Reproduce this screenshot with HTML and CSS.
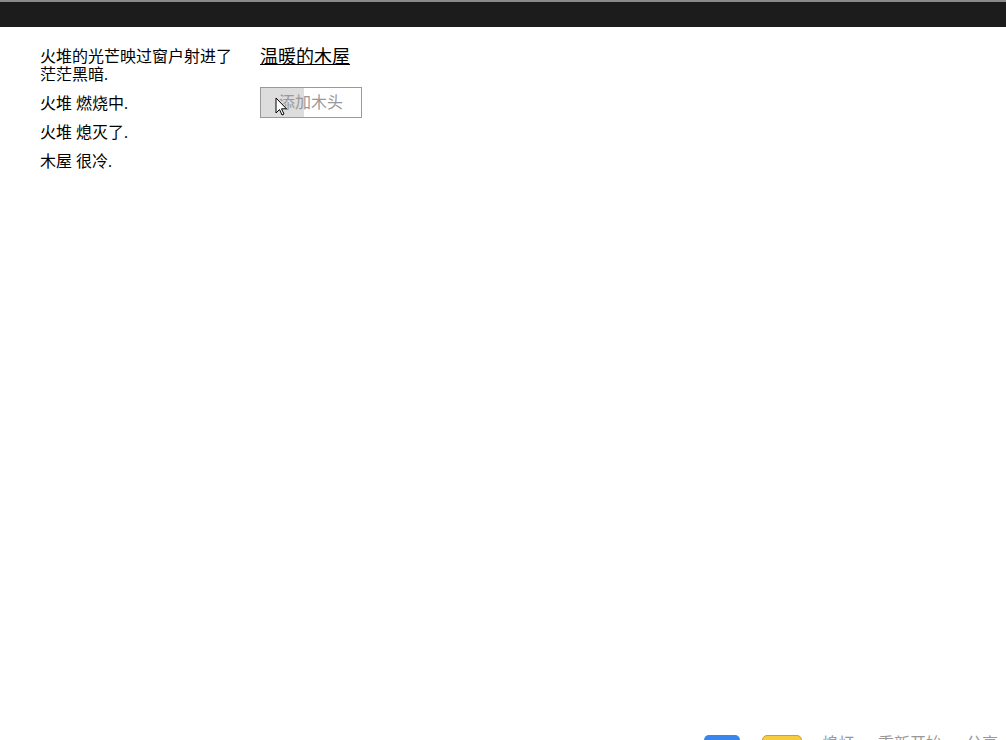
FILE: index.html
```html
<!DOCTYPE html>
<html>
<head>
    <link rel="stylesheet" href="styles.css">
</head>
<body>
    <div class="top-bar"></div>

    <div class="main">
        <div class="notifications">
            <div class="notification">火堆的光芒映过窗户射进了茫茫黑暗.</div>
            <div class="notification">火堆 燃烧中.</div>
            <div class="notification">火堆 熄灭了.</div>
            <div class="notification">木屋 很冷.</div>
        </div>

        <div class="location">
            <div class="header-button selected">温暖的木屋</div>
            <div class="button disabled">
                <div class="cooldown"></div>
                <span class="label">添加木头</span>
                <svg class="cursor" viewBox="0 0 12 19" width="12" height="19">
                    <path d="M1 1v15l3.5-3.5 2.5 5.5 2-1-2.5-5.2h5z" fill="#fff" stroke="#000" stroke-width="1"/>
                </svg>
            </div>
        </div>
    </div>

    <div class="footer">
        <div class="footer-logo">
            <svg viewBox="0 0 56 8" width="56" height="8">
                <path d="M0 3 Q12 1 24 6 L22 8 Q12 4 0 3z" fill="#111"/>
                <path d="M56 0 Q44 2 32 7 L36 8 Q46 3 56 0z" fill="#111"/>
            </svg>
        </div>
        <div class="footer-links">
            <span class="badge blue"></span>
            <span class="badge yellow"></span>
            <span class="link">熄灯.</span>
            <span class="link">重新开始.</span>
            <span class="link">分享.</span>
        </div>
    </div>
</body>
</html>
```

FILE: styles.css
```css
* {
    margin: 0;
    padding: 0;
    box-sizing: border-box;
}

html, body {
    height: 740px;
    overflow: hidden;
}

body {
    font-family: "Liberation Serif", "Noto Sans CJK SC", serif;
    font-size: 16px;
    color: #000;
    background: #fff;
}

.top-bar {
    height: 27px;
    background: #1c1c1c;
    border-top: 2px solid #8a8a8a;
}

.main {
    height: 708px;
    display: flex;
    padding: 21px 0 0 40px;
}

.notifications {
    width: 200px;
    line-height: 18px;
}

.notification {
    margin-bottom: 11px;
}

.location {
    margin-left: 20px;
    display: flex;
    flex-direction: column;
    align-items: flex-start;
}

.header-button {
    font-size: 18px;
    line-height: 20px;
    margin-top: -1px;
    cursor: pointer;
}

.header-button.selected {
    text-decoration: underline;
}

.button {
    position: relative;
    margin-top: 20px;
    width: 102px;
    height: 31px;
    border: 1px solid #999;
    color: #999;
    text-align: center;
    line-height: 29px;
    cursor: pointer;
}

.cooldown {
    position: absolute;
    left: 0;
    top: 0;
    bottom: 0;
    width: 43px;
    background: #dddddd;
}

.label {
    position: relative;
}

.cursor {
    position: absolute;
    left: 14px;
    top: 9px;
}

.footer {
    height: 40px;
    display: flex;
    align-items: flex-start;
    padding-left: 511px;
}

.footer-logo {
    width: 56px;
    height: 8px;
}

.footer-links {
    margin-left: 137px;
    display: flex;
    align-items: flex-start;
    color: #999;
    font-size: 16px;
    line-height: 18px;
}

.badge {
    display: block;
    height: 24px;
    border-radius: 5px;
}

.badge.blue {
    width: 36px;
    background: #3a86ef;
}

.badge.yellow {
    width: 40px;
    margin-left: 22px;
    background: #f7cc3e;
    border: 1px solid #c9a233;
}

.link {
    margin-left: 20px;
}
```
